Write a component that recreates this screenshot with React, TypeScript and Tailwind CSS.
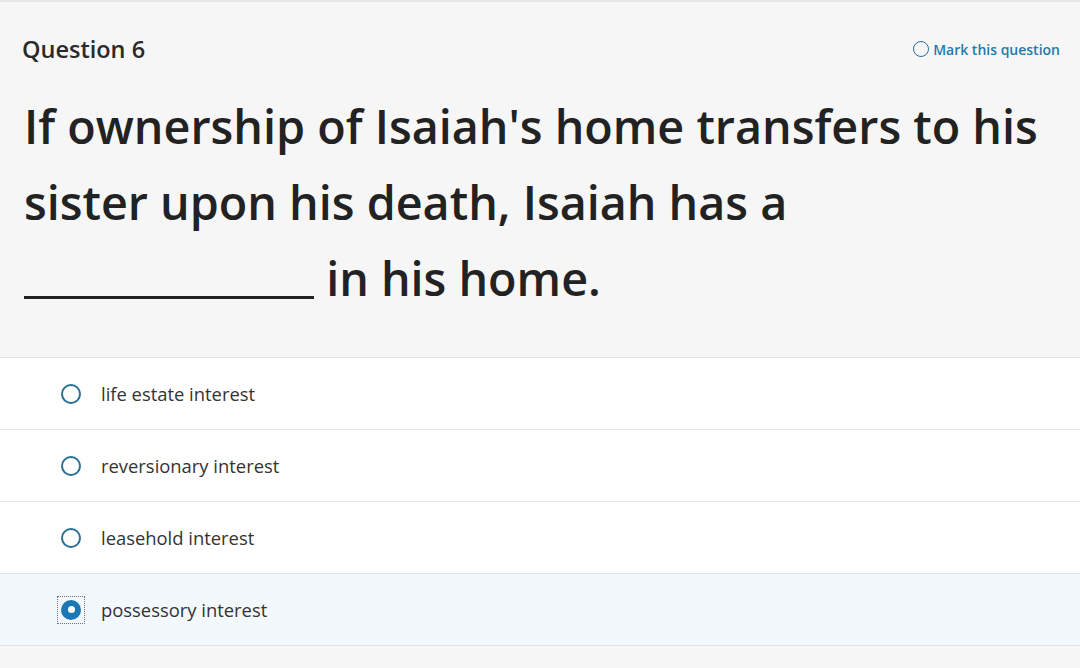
import { useState } from "react";

const options = [
  "life estate interest",
  "reversionary interest",
  "leasehold interest",
  "possessory interest",
];

const Radio = ({ checked }: { checked: boolean }) =>
  checked ? (
    <span className="flex h-[28px] w-[28px] items-center justify-center border border-dotted border-gray-500">
      <span className="flex h-[20px] w-[20px] items-center justify-center rounded-full bg-[#1b78b4]">
        <span className="h-[7px] w-[7px] rounded-full bg-white" />
      </span>
    </span>
  ) : (
    <span className="flex h-[28px] w-[28px] items-center justify-center">
      <span className="h-[20px] w-[20px] rounded-full border-2 border-[#2b6f93]" />
    </span>
  );

export default function App() {
  const [selected, setSelected] = useState(3);

  return (
    <div className="min-h-[668px] w-[1080px] bg-[#f6f6f6] font-['Open_Sans',sans-serif] text-[#222]">
      <div className="border-t-2 border-[#e6e6e6]">
        <div className="flex items-center justify-between pl-[22px] pr-[20px] pt-[30px]">
          <h2 className="text-[23.5px] font-semibold leading-[34px] text-[#2a2a2a]">Question 6</h2>
          <button className="flex items-center gap-[4px] text-[14px] font-semibold text-[#1f7bab]">
            <span className="h-[16px] w-[16px] rounded-full border-[1.5px] border-[#2b6f93]" />
            Mark this question
          </button>
        </div>
        <p className="px-[24px] pt-[22px] pb-[41px] text-[46.7px] font-semibold leading-[76px] text-[#222]">
          If ownership of Isaiah's home transfers to his sister upon his death, Isaiah has a{" "}
          <span className="inline-block w-[290px] -mb-[3px] border-b-[3px] border-[#222] align-baseline" /> in
          his home.
        </p>
      </div>
      <ul className="border-t border-[#e4e4e4]">
        {options.map((o, i) => (
          <li
            key={o}
            onClick={() => setSelected(i)}
            className={`flex h-[72px] cursor-pointer items-center gap-[16px] border-b border-[#e4e4e4] pl-[57px] ${
              selected === i ? "bg-[#f2f8fc]" : "bg-white"
            }`}
          >
            <Radio checked={selected === i} />
            <span className="text-[18.4px] text-[#333]">{o}</span>
          </li>
        ))}
      </ul>
    </div>
  );
}
